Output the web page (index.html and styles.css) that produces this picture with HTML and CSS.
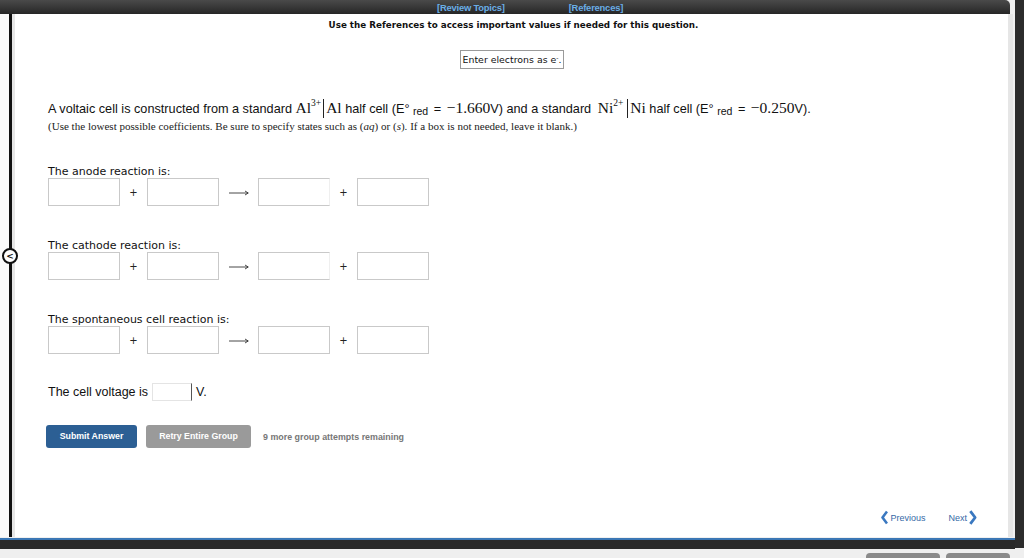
FILE: index.html
```html
<!DOCTYPE html>
<html>
<head>
<meta charset="utf-8">
<link rel="stylesheet" href="styles.css">
</head>
<body>
<div class="screen">
  <div class="topbar">
    <span class="toplink">[Review Topics]</span>
    <span class="toplink">[References]</span>
  </div>
  <div class="rightstrip"></div>
  <div class="page">
    <div class="gutter"></div>
    <div class="blackbar"></div>
    <div class="panel">
      <div class="refnote">Use the References to access important values if needed for this question.</div>
      <div class="hintrow"><span class="hint">Enter electrons as e<sup>-</sup>.</span></div>

      <p class="prompt">A voltaic cell is constructed from a standard <span class="m">Al<sup>3+</sup></span><span class="bar"></span><span class="m">Al</span> half cell (E° <sub>red</sub> <span class="eq">=</span> <span class="m">−1.660</span>V) and a standard <span class="m ni">Ni<sup>2+</sup></span><span class="bar"></span><span class="m">Ni</span> half cell (E° <sub>red</sub> <span class="eq">=</span> <span class="m">−0.250</span>V).</p>
      <p class="note">(Use the lowest possible coefficients. Be sure to specify states such as (<i>aq</i>) or (<i>s</i>). If a box is not needed, leave it blank.)</p>

      <div class="section">
        <div class="label">The anode reaction is:</div>
        <div class="eqrow">
          <span class="box"></span><span class="op">+</span><span class="box"></span><span class="arrow"><svg viewBox="0 0 20 6" width="20" height="6"><path d="M0 3 H19 M16 1 L19.3 3 L16 5" fill="none" stroke="#333" stroke-width="0.9"/></svg></span><span class="box noright"></span><span class="op">+</span><span class="box"></span>
        </div>
      </div>
      <div class="section">
        <div class="label">The cathode reaction is:</div>
        <div class="eqrow">
          <span class="box"></span><span class="op">+</span><span class="box"></span><span class="arrow"><svg viewBox="0 0 20 6" width="20" height="6"><path d="M0 3 H19 M16 1 L19.3 3 L16 5" fill="none" stroke="#333" stroke-width="0.9"/></svg></span><span class="box noright"></span><span class="op">+</span><span class="box"></span>
        </div>
      </div>
      <div class="section">
        <div class="label">The spontaneous cell reaction is:</div>
        <div class="eqrow">
          <span class="box"></span><span class="op">+</span><span class="box"></span><span class="arrow"><svg viewBox="0 0 20 6" width="20" height="6"><path d="M0 3 H19 M16 1 L19.3 3 L16 5" fill="none" stroke="#333" stroke-width="0.9"/></svg></span><span class="box"></span><span class="op">+</span><span class="box"></span>
        </div>
      </div>

      <div class="voltage">The cell voltage is <span class="vbox"></span> V.</div>

      <div class="actions">
        <span class="btn submit">Submit Answer</span>
        <span class="btn retry">Retry Entire Group</span>
        <span class="remaining">9 more group attempts remaining</span>
      </div>

      <div class="spacer"></div>
      <div class="nav">
        <span class="navlink"><svg class="chev" viewBox="0 0 7 14" width="7" height="15"><path d="M6 1 L1.5 7 L6 13" fill="none" stroke="#3a78c0" stroke-width="2.6" stroke-linejoin="round"/></svg>Previous</span>
        <span class="navlink">Next<svg class="chev" viewBox="0 0 7 14" width="8" height="15"><path d="M1 1 L5.5 7 L1 13" fill="none" stroke="#3a78c0" stroke-width="2.6" stroke-linejoin="round"/></svg></span>
      </div>
    </div>
  </div>
  <div class="bottombar"></div>
  <div class="tray">
    <span class="tab t1"></span><span class="tab t2"></span>
  </div>
  <div class="collapse">&lt;</div>
</div>
</body>
</html>
```

FILE: styles.css
```css
html, body { margin: 0; padding: 0; background: #ffffff; }
.screen { position: relative; width: 1024px; height: 558px; overflow: hidden; display: flex; flex-direction: column; background: #f0f0f0; }

.topbar {
  height: 14px; width: 1010px; flex: none;
  background: linear-gradient(#4a4a4a, #262626);
  border-top-right-radius: 5px;
  display: flex; align-items: center; gap: 64px;
  padding-left: 437px; box-sizing: border-box;
}
.toplink { font-family: "Liberation Sans", Arial, sans-serif; font-weight: bold; font-size: 9.4px; color: #6aaee6; letter-spacing: -0.2px; }

.rightstrip { position: absolute; right: 0; top: 0; width: 9px; height: 548px; background: #2c2c2c; }

.page { flex: none; height: 523px; display: flex; width: 1013px; background: #e6e6e6; }
.gutter { width: 9px; background: #fafafa; }
.blackbar { width: 3px; background: #111; }
.panel {
  flex: 1; background: #ffffff; margin-left: 3px; margin-right: 5px;
  display: flex; flex-direction: column; padding-left: 33px;
}

.refnote {
  margin: 5px 0 0 -29px; text-align: center;
  font-family: "DejaVu Sans", Verdana, sans-serif; font-weight: bold; font-size: 8.75px; color: #111; height: 13px; line-height: 13px;
}
.hintrow { margin: 18px 0 0 -30px; display: flex; justify-content: center; padding-right: 2px; }
.hint {
  border: 1px solid #9a9a9a; padding: 0 2px; height: 17px; line-height: 17px;
  font-family: "DejaVu Sans", Verdana, sans-serif; font-size: 9.4px; color: #111;
}
.hint sup { font-size: 6px; vertical-align: 3px; line-height: 0; }

.prompt {
  margin: 29px 0 0 0; font-family: "Liberation Sans", Arial, sans-serif; font-size: 12.7px; color: #111; line-height: 20px; white-space: nowrap;
}
.prompt .m { font-family: "Liberation Serif", "Times New Roman", serif; font-size: 15.5px; }
.prompt sup { font-size: 9.5px; vertical-align: 7px; line-height: 0; }
.prompt sub { font-size: 10.5px; vertical-align: -2px; line-height: 0; }
.prompt .ni { margin-left: 3px; }
.prompt .ni sup { margin-right: 2px; }
.prompt .eq { margin: 0 2px; }
.bar { display: inline-block; width: 1px; height: 19px; background: #222; vertical-align: -5px; margin: 0 2px 0 2px; }

.note {
  margin: 0 0 0 0; font-family: "Liberation Serif", "Times New Roman", serif; font-size: 11.05px; color: #222; line-height: 14px; white-space: nowrap;
}

.section { margin-top: 32px; display: flex; flex-direction: column; }
.section + .section { margin-top: 33px; }
.label { font-family: "DejaVu Sans", Verdana, sans-serif; font-size: 11px; color: #111; height: 13px; line-height: 13px; }
.eqrow { display: flex; align-items: center; margin-top: 0; }
.box { width: 70px; height: 26px; border: 1px solid #c9c9c9; background: #fff; display: inline-block; }
.box.noright { border-right-color: #efefef; }
.op { width: 27px; text-align: center; font-family: "DejaVu Sans", Verdana, sans-serif; font-size: 10px; color: #222; }
.arrow { width: 39px; display: flex; justify-content: center; padding-top: 2px; }
.arrow svg { display: block; }

.voltage {
  margin-top: 29px; font-family: "Liberation Sans", Arial, sans-serif; font-size: 12.5px; color: #111; display: flex; align-items: center; height: 18px;
}
.vbox { display: inline-block; width: 38px; height: 16px; border: 1px solid #e4e4e4; border-right: 1px solid #555; margin: 0 4px; }

.actions { margin-top: 24px; margin-left: -2px; display: flex; align-items: center; }
.btn {
  height: 23px; line-height: 23px; border-radius: 3px; text-align: center;
  font-family: "Liberation Sans", Arial, sans-serif; font-weight: bold; font-size: 8.8px; color: #fff;
}
.submit { width: 91px; background: #2c5f94; }
.retry { width: 105px; background: #9a9a9a; margin-left: 9px; }
.remaining { margin-left: 12px; font-family: "Liberation Sans", Arial, sans-serif; font-weight: bold; font-size: 8.9px; color: #777; }

.spacer { flex: 1; }
.nav { display: flex; justify-content: flex-end; gap: 23px; margin-right: 31px; margin-bottom: 12px; }
.navlink { display: flex; align-items: center; gap: 2px; font-family: "Liberation Sans", Arial, sans-serif; font-size: 9px; color: #3569a6; }
.chev { display: block; }

.bottombar { height: 9px; width: 1015px; flex: none; background: #2a2a2a; border-top: 2px solid #3b77b5; margin-top: 1px; }
.tray { flex: 1; background: #efefef; display: flex; justify-content: flex-end; padding-right: 14px; padding-top: 4px; gap: 6px; }
.tab { height: 10px; background: #8a8a8a; border-radius: 4px 4px 0 0; }
.t1 { width: 74px; }
.t2 { width: 64px; }

.collapse {
  position: absolute; left: 2px; top: 248px; width: 12px; height: 12px; border-radius: 50%;
  background: #fff; border: 2px solid #111; font-family: "DejaVu Sans", sans-serif; font-weight: bold; font-size: 9px; line-height: 12px; text-align: center; color: #111;
}
```
